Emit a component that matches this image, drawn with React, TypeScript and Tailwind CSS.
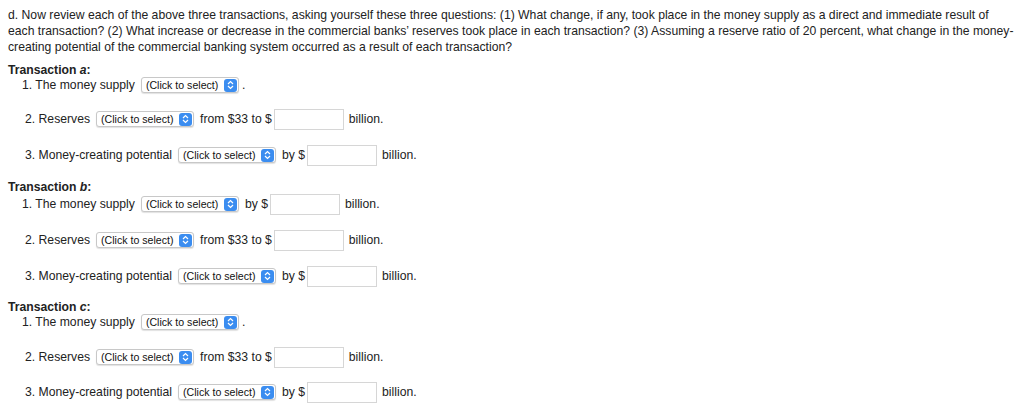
import React from "react";

const Select = () => (
  <span className="inline-flex h-[16px] w-[98px] items-center justify-between rounded-[3px] border border-[#c8c8c8] bg-white pl-[4px] pr-[1px] shadow-[0_1px_1px_rgba(0,0,0,0.12)]">
    <span className="text-[10.6px] leading-none text-[#111]">(Click to select)</span>
    <span className="flex h-[13px] w-[13px] items-center justify-center rounded-[3px] bg-[#3b8df0]">
      <svg width="7" height="10" viewBox="0 0 7 10" fill="none">
        <path d="M1 4 L3.5 1.5 L6 4" stroke="white" strokeWidth="1.2" />
        <path d="M1 6 L3.5 8.5 L6 6" stroke="white" strokeWidth="1.2" />
      </svg>
    </span>
  </span>
);

const Input = () => (
  <span className="inline-block h-[21px] w-[70px] border border-[#d6d6d6] bg-white" />
);

type RowProps = { children: React.ReactNode; className?: string };

const Row = ({ children, className = "" }: RowProps) => (
  <div className={`flex items-center whitespace-nowrap ${className}`}>{children}</div>
);

const MoneySupplyNoInput = ({ className }: { className?: string }) => (
  <Row className={`h-[16px] pl-[14px] ${className ?? ""}`}>
    <span>1. The money supply</span>
    <span className="ml-[6px]">
      <Select />
    </span>
    <span className="ml-[3px]">.</span>
  </Row>
);

const Reserves = ({ className }: { className?: string }) => (
  <Row className={`h-[20px] pl-[17px] ${className ?? ""}`}>
    <span>2. Reserves</span>
    <span className="ml-[6px] flex">
      <Select />
    </span>
    <span className="ml-[6px]">from $33 to $</span>
    <span className="ml-[2px] flex">
      <Input />
    </span>
    <span className="ml-[5px]">billion.</span>
  </Row>
);

const Potential = ({ className }: { className?: string }) => (
  <Row className={`h-[20px] pl-[17px] ${className ?? ""}`}>
    <span>3. Money-creating potential</span>
    <span className="ml-[6px] flex">
      <Select />
    </span>
    <span className="ml-[6px]">by $</span>
    <span className="ml-[2px] flex">
      <Input />
    </span>
    <span className="ml-[5px]">billion.</span>
  </Row>
);

const Heading = ({ letter, className = "" }: { letter: string; className?: string }) => (
  <div className={`flex h-[14px] items-center font-bold ${className}`}>
    Transaction&nbsp;<i>{letter}</i>:
  </div>
);

export default function App() {
  return (
    <main
      className="min-h-[415px] bg-white px-[8px] pt-[7px] text-[12.2px] leading-[16px] text-[#222]"
      style={{ fontFamily: '"Liberation Sans", Arial, sans-serif' }}
    >
      <p className="whitespace-nowrap">
        d. Now review each of the above three transactions, asking yourself these three questions: (1) What change, if
        any, took place in the money supply as a direct and immediate result of
        <br />
        each transaction? (2) What increase or decrease in the commercial banks’ reserves took place in each
        transaction? (3) Assuming a reserve ratio of 20 percent, what change in the money-
        <br />
        creating potential of the commercial banking system occurred as a result of each transaction?
      </p>

      <Heading letter="a" className="mt-[8px]" />
      <MoneySupplyNoInput />
      <Reserves className="mt-[16px]" />
      <Potential className="mt-[16px]" />

      <Heading letter="b" className="mt-[15px]" />
      <Row className="h-[20px] pl-[14px]">
        <span>1. The money supply</span>
        <span className="ml-[6px] flex">
          <Select />
        </span>
        <span className="ml-[6px]">by $</span>
        <span className="ml-[2px] flex">
          <Input />
        </span>
        <span className="ml-[5px]">billion.</span>
      </Row>
      <Reserves className="mt-[16px]" />
      <Potential className="mt-[16px]" />

      <Heading letter="c" className="mt-[14px]" />
      <MoneySupplyNoInput />
      <Reserves className="mt-[17px]" />
      <Potential className="mt-[15px]" />
    </main>
  );
}
